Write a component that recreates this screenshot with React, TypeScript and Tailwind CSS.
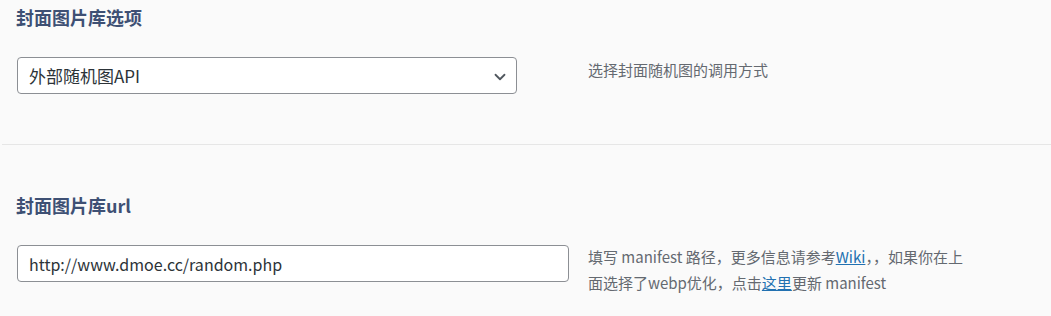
import { ChevronDown } from "lucide-react";

const font = { fontFamily: '"Segoe UI", "Noto Sans CJK SC", "Noto Sans", sans-serif' };

function Heading({ children }: { children: React.ReactNode }) {
  return (
    <h2 className="text-[18px] font-bold leading-[24px] text-[#3e5074] pl-[16px]">
      {children}
    </h2>
  );
}

export default function App() {
  return (
    <div className="w-[1051px] h-[316px] overflow-hidden bg-[#fafafa]" style={font}>
      <section className="pt-[5px] pb-[50px]">
        <Heading>封面图片库选项</Heading>
        <div className="mt-[28px] flex items-start pl-[17px]">
          <div className="relative w-[500px] h-[37px] rounded-[4px] border border-[#8c8f94] bg-white flex items-center pl-[11px]">
            <span className="text-[17px] text-[#2c3338]">外部随机图API</span>
            <ChevronDown className="absolute right-[7px] top-[10px] w-[18px] h-[18px] text-[#50575e]" strokeWidth={2.4} />
          </div>
          <p className="ml-[71px] text-[15px] leading-[26px] text-[#646970]">
            选择封面随机图的调用方式
          </p>
        </div>
      </section>
      <div className="ml-[2px] h-px bg-[#e6e6e6]" />
      <section className="pt-[48px]">
        <Heading>封面图片库url</Heading>
        <div className="mt-[28px] flex items-start pl-[17px]">
          <div className="w-[552px] h-[37px] rounded-[4px] border border-[#8c8f94] bg-white flex items-center pl-[11px]">
            <span className="text-[16px] text-[#2c3338]">http://www.dmoe.cc/random.php</span>
          </div>
          <p className="ml-[19px] w-[382px] -mt-[1px] text-[15px] leading-[26px] text-[#646970]">
            填写 manifest 路径，更多信息请参考
            <a className="text-[#2271b1] underline">Wiki</a>
            ，，如果你在上面选择了webp优化，点击
            <a className="text-[#2271b1] underline">这里</a>
            更新 manifest
          </p>
        </div>
      </section>
    </div>
  );
}
